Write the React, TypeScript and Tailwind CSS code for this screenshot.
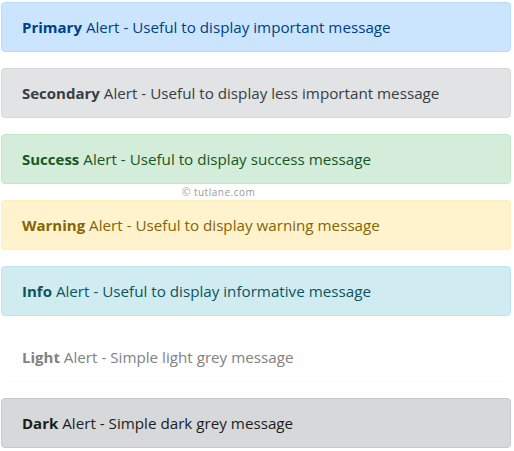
const alerts = [
  { title: "Primary", text: "Alert - Useful to display important message", cls: "bg-[#cce5ff] border-[#b8daff] text-[#004085]" },
  { title: "Secondary", text: "Alert - Useful to display less important message", cls: "bg-[#e2e3e5] border-[#d6d8db] text-[#383d41]" },
  { title: "Success", text: "Alert - Useful to display success message", cls: "bg-[#d4edda] border-[#c3e6cb] text-[#155724]" },
  { title: "Warning", text: "Alert - Useful to display warning message", cls: "bg-[#fff3cd] border-[#ffeeba] text-[#856404]" },
  { title: "Info", text: "Alert - Useful to display informative message", cls: "bg-[#d1ecf1] border-[#bee5eb] text-[#0c5460]" },
  { title: "Light", text: "Alert - Simple light grey message", cls: "bg-[#fefefe] border-[#fdfdfe] text-[#818182]" },
  { title: "Dark", text: "Alert - Simple dark grey message", cls: "bg-[#d6d8d9] border-[#c6c8ca] text-[#1b1e21]" },
]

export default function App() {
  return (
    <div className="relative w-[514px] h-[451px] bg-white pt-[2px] pl-[1px] font-['Open_Sans',sans-serif]">
      <div className="flex flex-col gap-4 w-[510px]">
        {alerts.map((a) => (
          <div key={a.title} className={`border rounded px-5 py-3 text-[15.2px] leading-6 ${a.cls}`}>
            <strong className="font-bold text-[15px]">{a.title}</strong> {a.text}
          </div>
        ))}
      </div>
      <div className="absolute left-[182px] top-[184px] text-[10px] leading-4 text-[#9a9a9a] tracking-[0.5px]">
        © tutlane.com
      </div>
    </div>
  )
}
